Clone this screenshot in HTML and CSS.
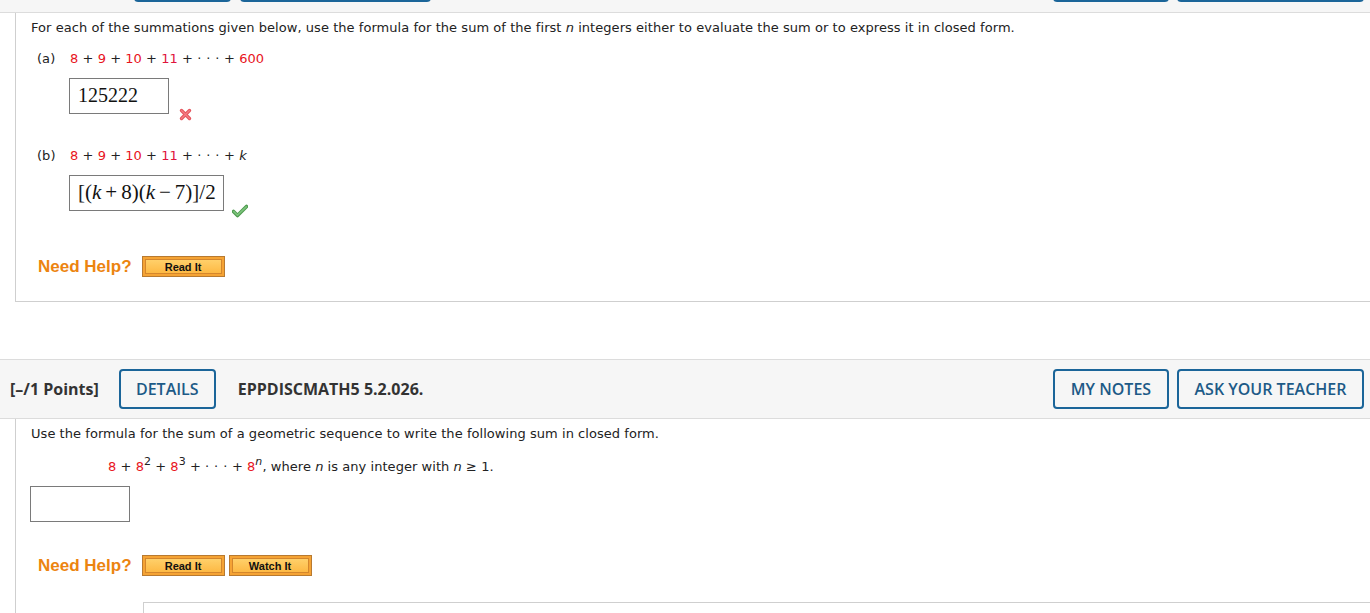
FILE: index.html
```html
<!DOCTYPE html>
<html>
<head>
<meta charset="utf-8">
<link rel="stylesheet" href="styles.css">
</head>
<body>
<div class="qhead qhead-top">
  <div class="hb-spacer-a"></div>
  <span class="hbtn hbtn-top1"></span>
  <span class="hbtn hbtn-top2"></span>
  <div class="grow"></div>
  <span class="hbtn hbtn-notes"></span>
  <span class="hbtn hbtn-ask"></span>
</div>

<div class="panel panel-1">
  <p class="intro">For each of the summations given below, use the formula for the sum of the first <i>n</i> integers either to evaluate the sum or to express it in closed form.</p>

  <div class="part">
    <div class="part-label"><span class="lbl">(a)</span><span class="expr"><span class="r1">8</span> + <span class="r1">9</span> + <span class="r1">10</span> + <span class="r2">11</span> + <span class="dots">&middot; &middot; &middot;</span> + <span class="r1">600</span></span></div>
    <div class="answer-row">
      <div class="answer-box">125222</div>
      <svg class="mark mark-x" width="13" height="13" viewBox="0 0 13 13"><path d="M2.5 2.5 L10.5 10.5 M10.5 2.5 L2.5 10.5" stroke="#e5545c" stroke-width="3.4" stroke-linecap="round"/><path d="M2.5 2.5 L10.5 10.5 M10.5 2.5 L2.5 10.5" stroke="#f47d84" stroke-width="1.2" stroke-linecap="round"/></svg>
    </div>
  </div>

  <div class="part part-b">
    <div class="part-label"><span class="lbl">(b)</span><span class="expr"><span class="r1">8</span> + <span class="r1">9</span> + <span class="r1">10</span> + <span class="r2">11</span> + <span class="dots">&middot; &middot; &middot;</span> + <i class="kv">k</i></span></div>
    <div class="answer-row">
      <div class="answer-box answer-wide"><span class="mo">[</span>(<i>k</i><span class="op">+</span>8)(<i>k</i><span class="op">&minus;</span>7)<span class="mo">]</span>/2</div>
      <svg class="mark mark-check" width="16" height="14" viewBox="0 0 16 14"><path d="M1.5 7.5 L5.5 11.5 L14.5 2.5" fill="none" stroke="#4e9a4e" stroke-width="3.6" stroke-linejoin="round" stroke-linecap="round"/><path d="M1.8 7.6 L5.5 11.2 L14.2 2.8" fill="none" stroke="#7cc47c" stroke-width="1.6" stroke-linejoin="round" stroke-linecap="round"/></svg>
    </div>
  </div>

  <div class="help">
    <span class="need">Need Help?</span>
    <span class="hbutton"><span>Read It</span></span>
  </div>
</div>

<div class="qhead qhead-2">
  <span class="points">[&ndash;/1 Points]</span>
  <span class="hbtn hbtn-details">DETAILS</span>
  <span class="qid">EPPDISCMATH5 5.2.026.</span>
  <div class="grow"></div>
  <span class="hbtn hbtn-notes">MY NOTES</span>
  <span class="hbtn hbtn-ask">ASK YOUR TEACHER</span>
</div>

<div class="panel panel-2">
  <p class="intro">Use the formula for the sum of a geometric sequence to write the following sum in closed form.</p>
  <p class="gexpr"><span class="r1">8</span> + <span class="r1">8</span><sup>2</sup> + <span class="r1">8</span><sup>3</sup> + <span class="dots">&middot; &middot; &middot;</span> + <span class="r1">8</span><sup><i>n</i></sup>, where <i>n</i> is any integer with <i>n</i> &ge; 1.</p>
  <div class="answer-box empty"></div>
  <div class="help help-2">
    <span class="need">Need Help?</span>
    <span class="hbutton"><span>Read It</span></span>
    <span class="hbutton"><span>Watch It</span></span>
  </div>
  <div class="next-box"></div>
</div>
</body>
</html>
```

FILE: styles.css
```css
html, body {
  margin: 0;
  padding: 0;
  background: #fff;
}
body {
  width: 1370px;
  height: 613px;
  overflow: hidden;
  font-family: "DejaVu Sans", Verdana, sans-serif;
  font-size: 13px;
  letter-spacing: 0.05px;
  color: #222;
}
p { margin: 0; }

.qhead {
  display: flex;
  align-items: center;
  background: #f6f6f6;
  border-bottom: 1px solid #dcdcdc;
  font-family: "Open Sans", sans-serif;
  font-size: 16px;
  letter-spacing: 0;
  color: #333;
  box-sizing: border-box;
}
.grow { flex: 1; }

.qhead-top {
  height: 13px;
  align-items: flex-end;
  overflow: hidden;
  padding-bottom: 10px;
}
.hb-spacer-a { width: 134px; flex: none; }
.hbtn {
  flex: none;
  box-sizing: border-box;
  height: 40px;
  border: 2px solid #1b6599;
  border-radius: 4px;
  color: #1d5a87;
  background: #f6f6f6;
  display: flex;
  align-items: center;
  justify-content: center;
  font-weight: 600;
}
.hbtn-top1 { width: 97px; }
.hbtn-top2 { width: 191px; margin-left: 9px; }
.hbtn-notes { width: 116px; }
.hbtn-ask { width: 187px; margin-left: 8px; margin-right: 6px; }

.panel {
  margin-left: 15px;
  border-left: 1px solid #cfcfcf;
  padding-left: 15px;
}
.panel-1 {
  height: 289px;
  border-bottom: 1px solid #cfcfcf;
  padding-top: 7px;
  box-sizing: border-box;
}
.intro { line-height: 16px; }

.part { margin-top: 15px; }
.part-b { margin-top: 34px; }
.part-label {
  display: flex;
  line-height: 16px;
  padding-left: 6px;
  white-space: pre;
}
.lbl { width: 33px; }
.expr { color: #222; }
.dots { letter-spacing: 0.4px; }
.r1 { color: #e8141c; }
.r2 { color: #e0143c; }
.kv { font-family: "DejaVu Sans", sans-serif; }

.answer-row {
  display: flex;
  align-items: flex-end;
  margin-left: 38px;
  margin-top: 11px;
}
.answer-box {
  box-sizing: border-box;
  width: 100px;
  height: 36px;
  border: 1px solid #7a7a7a;
  font-family: "Liberation Serif", "DejaVu Serif", serif;
  font-size: 20px;
  letter-spacing: 0;
  color: #111;
  padding-left: 8px;
  line-height: 32px;
}
.answer-wide { width: 155px; font-size: 21px; }
.op { margin: 0 4px; }
.mo { color: #222; }
.mark { flex: none; display: block; }
.mark-x { margin-left: 10px; margin-bottom: -7px; }
.mark-check { margin-left: 8px; margin-bottom: -7px; }

.help {
  display: flex;
  align-items: center;
  margin-top: 45px;
  padding-left: 7px;
}
.need {
  font-family: "Liberation Sans", Arial, sans-serif;
  font-weight: bold;
  font-size: 17px;
  letter-spacing: 0;
  color: #ec8410;
  margin-right: 10px;
}
.hbutton {
  box-sizing: border-box;
  width: 83px;
  height: 21px;
  border: 1px solid #b87a30;
  background: #f5a334;
  padding: 2px;
  margin-right: 4px;
  display: flex;
}
.hbutton span {
  flex: 1;
  border: 1px solid #d4862c;
  background: linear-gradient(#ffd06a, #fdb944);
  font-family: "Liberation Sans", Arial, sans-serif;
  font-weight: bold;
  font-size: 11px;
  letter-spacing: 0;
  color: #111;
  display: flex;
  align-items: center;
  justify-content: center;
}

.qhead-2 {
  margin-top: 57px;
  border-top: 1px solid #dcdcdc;
  height: 60px;
}
.points {
  font-weight: 700;
  margin-left: 10px;
  margin-right: 20px;
}
.hbtn-details { width: 97px; }
.qid {
  font-weight: 700;
  margin-left: 22px;
}

.panel-2 {
  padding-top: 7px;
  height: 200px;
}
.gexpr {
  margin-top: 17px;
  margin-left: 77px;
  line-height: 16px;
}
.gexpr sup {
  font-size: 11px;
  vertical-align: 6px;
  line-height: 0;
}
.empty {
  margin-top: 11px;
  margin-left: -1px;
}
.help-2 { margin-top: 33px; }
.next-box {
  margin-top: 26px;
  margin-left: 112px;
  height: 20px;
  border-top: 1px solid #cfcfcf;
  border-left: 1px solid #cfcfcf;
}
```
